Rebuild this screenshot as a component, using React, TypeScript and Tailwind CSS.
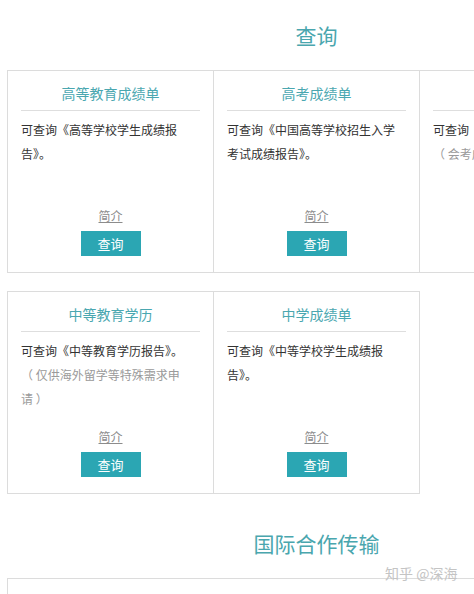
import React from "react";

type Card = { title: string; body: string; note?: string };

const row1: Card[] = [
  { title: "高等教育成绩单", body: "可查询《高等学校学生成绩报告》。" },
  { title: "高考成绩单", body: "可查询《中国高等学校招生入学考试成绩报告》。" },
  { title: "会考成绩单", body: "可查询《高中会考成绩报告》。", note: "（ 会考成绩仅限部分省份 ）" },
];

const row2: Card[] = [
  { title: "中等教育学历", body: "可查询《中等教育学历报告》。", note: "（ 仅供海外留学等特殊需求申请 ）" },
  { title: "中学成绩单", body: "可查询《中等学校学生成绩报告》。" },
];

function CardBox({ card, first }: { card: Card; first: boolean }) {
  return (
    <div
      className={`w-[207px] h-[203px] shrink-0 border border-[#dcdcdc] bg-white px-[13px] pb-[16px] flex flex-col ${
        first ? "" : "ml-[-1px]"
      }`}
    >
      <div className="pt-[11px] pb-[6px] border-b border-[#dedede] text-center text-[14px] leading-[22px] text-[#4aa7b0]">
        {card.title}
      </div>
      <div className="mt-[7px] w-[169px] text-[12px] leading-[24px]">
        <div className="text-[#333333]">{card.body}</div>
        {card.note && <div className="text-[#9a9a9a]">{card.note}</div>}
      </div>
      <div className="mt-auto flex flex-col items-center">
        <span className="text-[12px] leading-[16px] text-[#8c8c8c] underline">简介</span>
        <button className="mt-[7px] w-[60px] h-[25px] bg-[#2ba6b3] text-white text-[13px] leading-[25px]">
          查询
        </button>
      </div>
    </div>
  );
}

export default function App() {
  return (
    <div
      className="relative w-[474px] h-[594px] overflow-hidden bg-white"
      style={{ fontFamily: '"Noto Sans CJK SC", "Noto Sans", sans-serif' }}
    >
      <div className="ml-[7px] w-[619px]">
        <h2 className="pt-[22px] text-center text-[21px] leading-[26px] text-[#4aa6ae]">查询</h2>
        <div className="mt-[22px] flex">
          {row1.map((c, i) => (
            <CardBox key={c.title} card={c} first={i === 0} />
          ))}
        </div>
        <div className="mt-[18px] flex">
          {row2.map((c, i) => (
            <CardBox key={c.title} card={c} first={i === 0} />
          ))}
        </div>
        <h2 className="mt-[36px] text-center text-[21px] leading-[26px] text-[#4aa6ae]">国际合作传输</h2>
        <div className="mt-[22px] h-[60px] border border-[#dcdcdc]" />
      </div>
      <div className="absolute left-[385px] top-[563px] text-[14px] leading-[20px] text-[#c4c4c4]">
        知乎 @深海
      </div>
    </div>
  );
}
